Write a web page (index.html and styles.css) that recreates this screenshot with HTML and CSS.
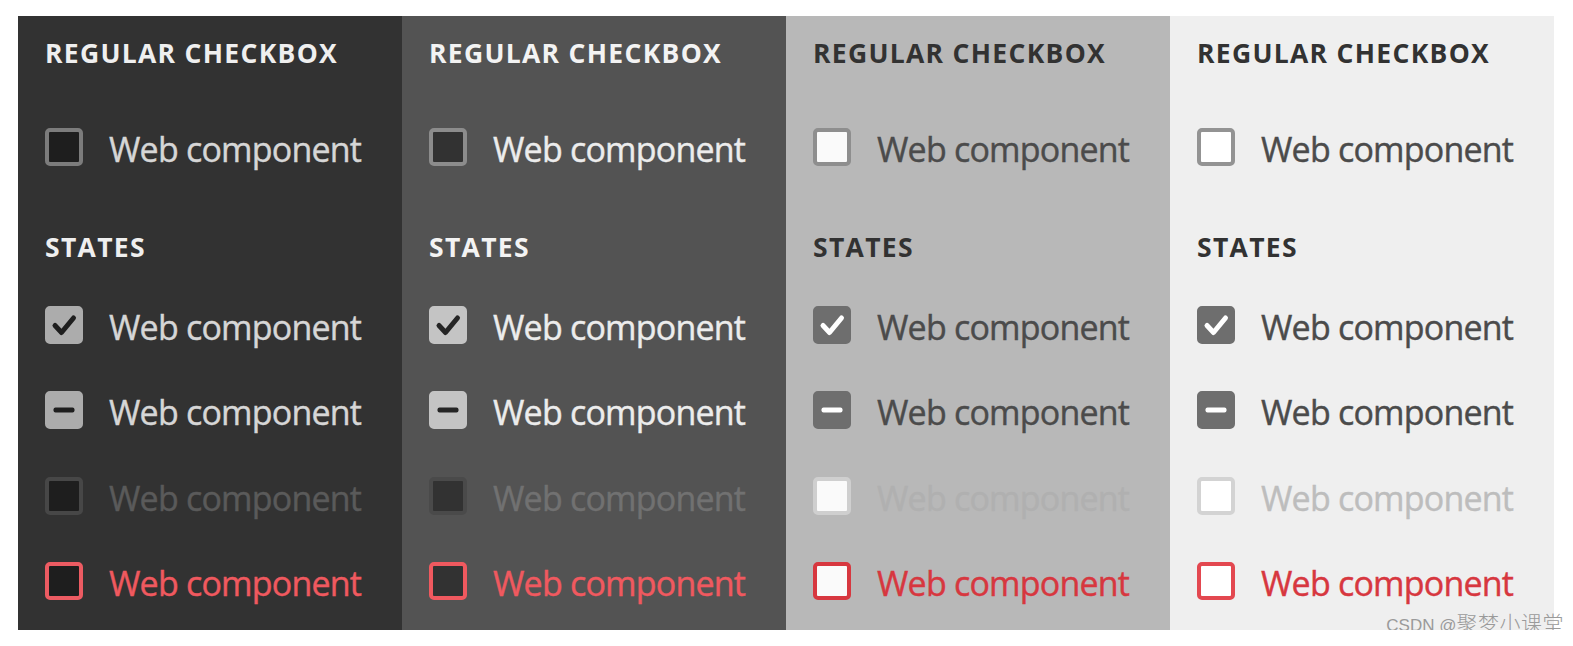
FILE: index.html
```html
<!DOCTYPE html>
<html lang="en">
<head>
<meta charset="utf-8">
<title>Checkbox states</title>
<link rel="stylesheet" href="styles.css">
</head>
<body>
<div class="sheet">
  <section class="col theme-darkest">
    <h2 class="heading heading-top">REGULAR CHECKBOX</h2>
    <div class="row row-first"><span class="box"></span><span class="label">Web component</span></div>
    <h2 class="heading heading-states">STATES</h2>
    <div class="row row-checked"><span class="box box-on"><svg viewBox="4 4 30 30"><path d="M10 19.5 L16.5 26.5 L28.5 12"/></svg></span><span class="label">Web component</span></div>
    <div class="row"><span class="box box-on"><svg viewBox="4 4 30 30"><rect x="8.5" y="16.5" width="21" height="5" rx="2"/></svg></span><span class="label">Web component</span></div>
    <div class="row is-disabled"><span class="box"></span><span class="label">Web component</span></div>
    <div class="row is-error"><span class="box"></span><span class="label">Web component</span></div>
  </section>
  <section class="col theme-dark">
    <h2 class="heading heading-top">REGULAR CHECKBOX</h2>
    <div class="row row-first"><span class="box"></span><span class="label">Web component</span></div>
    <h2 class="heading heading-states">STATES</h2>
    <div class="row row-checked"><span class="box box-on"><svg viewBox="4 4 30 30"><path d="M10 19.5 L16.5 26.5 L28.5 12"/></svg></span><span class="label">Web component</span></div>
    <div class="row"><span class="box box-on"><svg viewBox="4 4 30 30"><rect x="8.5" y="16.5" width="21" height="5" rx="2"/></svg></span><span class="label">Web component</span></div>
    <div class="row is-disabled"><span class="box"></span><span class="label">Web component</span></div>
    <div class="row is-error"><span class="box"></span><span class="label">Web component</span></div>
  </section>
  <section class="col theme-light">
    <h2 class="heading heading-top">REGULAR CHECKBOX</h2>
    <div class="row row-first"><span class="box"></span><span class="label">Web component</span></div>
    <h2 class="heading heading-states">STATES</h2>
    <div class="row row-checked"><span class="box box-on"><svg viewBox="4 4 30 30"><path d="M10 19.5 L16.5 26.5 L28.5 12"/></svg></span><span class="label">Web component</span></div>
    <div class="row"><span class="box box-on"><svg viewBox="4 4 30 30"><rect x="8.5" y="16.5" width="21" height="5" rx="2"/></svg></span><span class="label">Web component</span></div>
    <div class="row is-disabled"><span class="box"></span><span class="label">Web component</span></div>
    <div class="row is-error"><span class="box"></span><span class="label">Web component</span></div>
  </section>
  <section class="col theme-lightest">
    <h2 class="heading heading-top">REGULAR CHECKBOX</h2>
    <div class="row row-first"><span class="box"></span><span class="label">Web component</span></div>
    <h2 class="heading heading-states">STATES</h2>
    <div class="row row-checked"><span class="box box-on"><svg viewBox="4 4 30 30"><path d="M10 19.5 L16.5 26.5 L28.5 12"/></svg></span><span class="label">Web component</span></div>
    <div class="row"><span class="box box-on"><svg viewBox="4 4 30 30"><rect x="8.5" y="16.5" width="21" height="5" rx="2"/></svg></span><span class="label">Web component</span></div>
    <div class="row is-disabled"><span class="box"></span><span class="label">Web component</span></div>
    <div class="row is-error"><span class="box"></span><span class="label">Web component</span></div>
  </section>
  <div class="watermark">CSDN @<span class="watermark-cjk">聚梦小课堂</span></div>
</div>
</body>
</html>
```

FILE: styles.css
```css
html, body {
  margin: 0;
  padding: 0;
  background: #ffffff;
}

body {
  font-family: "Open Sans", "Noto Sans", sans-serif;
}

.sheet {
  position: relative;
  display: grid;
  grid-template-columns: repeat(4, 384px);
  margin: 16px 0 0 18px;
  width: 1536px;
  height: 614px;
}

.col {
  display: flex;
  flex-direction: column;
  padding: 17px 0 0 27px;
  background: var(--bg);
}

.heading {
  margin: 0;
  height: 40px;
  line-height: 40px;
  font-size: 26.5px;
  font-weight: 700;
  letter-spacing: 1.3px;
  color: var(--head);
}

.heading-states {
  margin-top: 60px;
}

.row {
  display: flex;
  align-items: center;
  height: 40px;
  margin-top: 45.3px;
}

.row-first {
  margin-top: 53.5px;
}

.row-checked {
  margin-top: 38.5px;
}

.box {
  box-sizing: border-box;
  flex: none;
  width: 38px;
  height: 38px;
  border: 4px solid var(--box-border);
  border-radius: 5px;
  background: var(--box-fill);
  display: flex;
}

.box svg {
  width: 30px;
  height: 30px;
}

.box-on {
  background: var(--on-fill);
  border-color: var(--on-fill);
}

.box-on path {
  fill: none;
  stroke: var(--mark);
  stroke-width: 5;
  stroke-linecap: round;
  stroke-linejoin: round;
}

.box-on rect {
  fill: var(--mark);
}

.label {
  margin-left: 26px;
  font-size: 34px;
  font-weight: 400;
  line-height: 40px;
  letter-spacing: -0.8px;
  color: var(--text);
  -webkit-text-stroke: 0.4px currentColor;
  position: relative;
  top: 2px;
}

.is-disabled .box {
  border-color: var(--dis-border);
}

.is-disabled .label {
  color: var(--dis-text);
}

.is-error .box {
  border-color: var(--err-border);
}

.is-error .label {
  color: var(--err-text);
}

.theme-darkest {
  --bg: #323232;
  --head: #efefef;
  --text: #d6d6d6;
  --box-border: #7c7c7c;
  --box-fill: #1e1e1e;
  --on-fill: #acacac;
  --mark: #1e1e1e;
  --dis-border: #474747;
  --dis-text: #5a5a5a;
  --err-border: #ec5b62;
  --err-text: #f0595f;
}

.theme-dark {
  --bg: #535353;
  --head: #f3f3f3;
  --text: #ececec;
  --box-border: #8c8c8c;
  --box-fill: #323232;
  --on-fill: #c4c4c4;
  --mark: #252525;
  --dis-border: #4a4a4a;
  --dis-text: #717171;
  --err-border: #f0595f;
  --err-text: #f0595f;
}

.theme-light {
  --bg: #b8b8b8;
  --head: #323232;
  --text: #4b4b4b;
  --box-border: #8e8e8e;
  --box-fill: #fafafa;
  --on-fill: #6e6e6e;
  --mark: #ffffff;
  --dis-border: #cfcfcf;
  --dis-text: #b0b0b0;
  --err-border: #d7373f;
  --err-text: #d7373f;
}

.theme-lightest {
  --bg: #efefef;
  --head: #323232;
  --text: #4b4b4b;
  --box-border: #939393;
  --box-fill: #ffffff;
  --on-fill: #6e6e6e;
  --mark: #ffffff;
  --dis-border: #d3d3d3;
  --dis-text: #bdbdbd;
  --err-border: #e34850;
  --err-text: #d7373f;
}

.watermark {
  position: absolute;
  right: -10px;
  top: 595px;
  font-family: "Liberation Sans", "Noto Sans CJK SC", sans-serif;
  font-size: 17px;
  line-height: 22px;
  color: #9a9a9a;
  white-space: nowrap;
}

.watermark-cjk {
  font-family: "Noto Sans CJK SC", sans-serif;
  font-size: 21px;
  font-weight: 300;
  letter-spacing: 0.5px;
}
```
